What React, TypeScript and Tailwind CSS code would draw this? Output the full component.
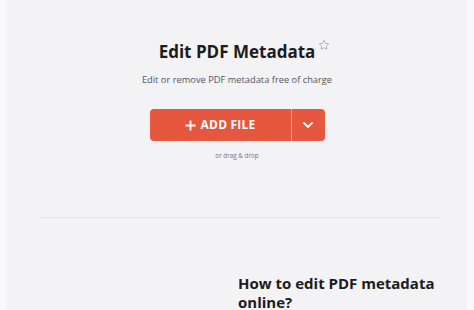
export default function App() {
  return (
    <div
      className="h-[310px] w-[474px] overflow-hidden bg-[#f8f7f9]"
      style={{ fontFamily: '"Open Sans", "Noto Sans", sans-serif' }}
    >
      <div className="mx-[7px] h-full bg-[#f3f2f5]">
        <div className="flex flex-col items-center pt-[39px]">
          <div className="relative">
            <h1 className="text-[17px] font-bold leading-[26px] text-[#1c1c1c]">Edit PDF Metadata</h1>
            <svg
              className="absolute -right-[15px] top-[0px]"
              width="12"
              height="12"
              viewBox="0 0 24 24"
              fill="none"
              stroke="#b5b4b8"
              strokeWidth="2"
              strokeLinejoin="round"
            >
              <path d="M12 2.5l2.9 6.1 6.6.8-4.9 4.6 1.3 6.6L12 17.3l-5.9 3.3 1.3-6.6-4.9-4.6 6.6-.8z" />
            </svg>
          </div>
          <p className="mt-[8px] text-[9.3px] leading-[14px] text-[#555459]">
            Edit or remove PDF metadata free of charge
          </p>
          <div className="mt-[22px] flex h-[32px] w-[175px] overflow-hidden rounded-[4px] bg-[#e5573f] text-white">
            <button className="flex flex-1 items-center justify-center gap-[5px] text-[12px] font-bold tracking-[0.2px]">
              <svg width="11" height="11" viewBox="0 0 12 12" stroke="white" strokeWidth="2">
                <path d="M6 0.5v11M0.5 6h11" />
              </svg>
              ADD FILE
            </button>
            <div className="w-px bg-[#f3a493]" />
            <button className="flex w-[33px] items-center justify-center">
              <svg width="10" height="6" viewBox="0 0 10 6" fill="none" stroke="white" strokeWidth="1.8" strokeLinecap="round" strokeLinejoin="round">
                <path d="M1 1l4 4 4-4" />
              </svg>
            </button>
          </div>
          <p className="mt-[10px] text-[6.3px] leading-[10px] text-[#77767b]">or drag &amp; drop</p>
        </div>
        <div className="ml-[33px] mr-[27px] mt-[56px] h-px bg-[#e6e5e8]" />
        <div className="grid grid-cols-2 pt-[56px]">
          <div />
          <h2 className="pl-[1px] text-[15px] font-bold leading-[19px] text-[#1c1c1c]">
            How to edit PDF metadata online?
          </h2>
        </div>
      </div>
    </div>
  );
}
